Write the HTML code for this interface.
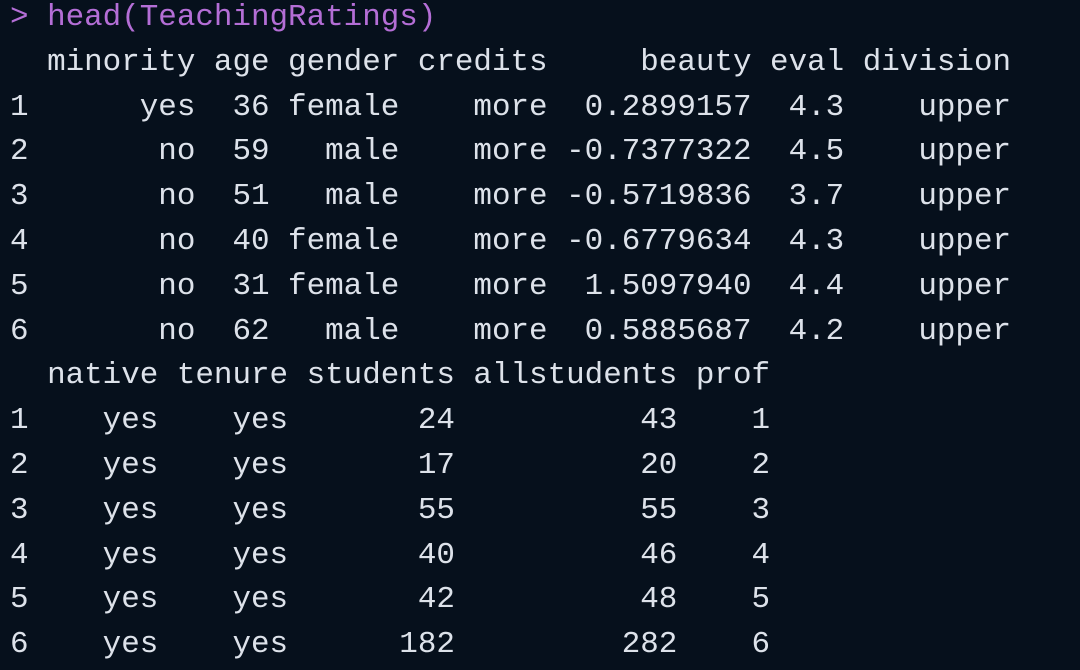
<!DOCTYPE html>
<html><head><meta charset="utf-8"><style>
html,body{margin:0;padding:0;background:#06101c;width:1080px;height:670px;overflow:hidden}
pre{position:absolute;left:10px;top:-4px;margin:0;font-family:"Liberation Mono","DejaVu Sans Mono",monospace;font-size:30.9px;line-height:44.8px;color:#dde2ea;white-space:pre}
.p{color:#b46ed6}
</style></head><body>
<pre><span class="p">&gt; head(TeachingRatings)</span>
  minority age gender credits     beauty eval division
1      yes  36 female    more  0.2899157  4.3    upper
2       no  59   male    more -0.7377322  4.5    upper
3       no  51   male    more -0.5719836  3.7    upper
4       no  40 female    more -0.6779634  4.3    upper
5       no  31 female    more  1.5097940  4.4    upper
6       no  62   male    more  0.5885687  4.2    upper
  native tenure students allstudents prof
1    yes    yes       24          43    1
2    yes    yes       17          20    2
3    yes    yes       55          55    3
4    yes    yes       40          46    4
5    yes    yes       42          48    5
6    yes    yes      182         282    6</pre>
</body></html>
